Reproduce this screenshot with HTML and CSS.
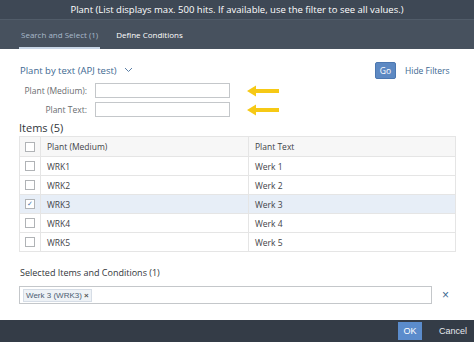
FILE: index.html
```html
<!DOCTYPE html>
<html lang="en">
<head>
    <meta charset="UTF-8">
    <meta name="viewport" content="width=device-width, initial-scale=1.0">
    <title>Plant Value Help</title>
    <link rel="stylesheet" href="styles.css">
</head>
<body>
    <div class="dialog">
        <div class="title">Plant (List displays max. 500 hits. If available, use the filter to see all values.)</div>
        <div class="tabs">
            <span class="tab active">Search and Select (1)</span>
            <span class="tab">Define Conditions</span>
        </div>

        <div class="content">
            <div class="filter-head">
                <span class="variant">Plant by text (APJ test)
                    <svg class="chev" width="9" height="6" viewBox="0 0 9 6"><path d="M1 1l3.5 3.5L8 1" fill="none" stroke="#5b7fa6" stroke-width="1"/></svg>
                </span>
                <span class="filter-actions">
                    <button class="go">Go</button>
                    <span class="link">Hide Filters</span>
                </span>
            </div>

            <div class="filters">
                <div class="field">
                    <label>Plant (Medium):</label>
                    <input type="text">
                    <svg class="arrow" width="34" height="12" viewBox="0 0 34 12"><path d="M1 6l9-5.5v3.5h23v4H10v3.5z" fill="#f6c915"/></svg>
                </div>
                <div class="field">
                    <label>Plant Text:</label>
                    <input type="text">
                    <svg class="arrow" width="34" height="12" viewBox="0 0 34 12"><path d="M1 6l9-5.5v3.5h23v4H10v3.5z" fill="#f6c915"/></svg>
                </div>
            </div>

            <div class="section-title">Items (5)</div>
            <table class="items">
                <tr class="head">
                    <td class="cb"><span class="box"></span></td>
                    <td>Plant (Medium)</td>
                    <td>Plant Text</td>
                </tr>
                <tr><td class="cb"><span class="box"></span></td><td>WRK1</td><td>Werk 1</td></tr>
                <tr><td class="cb"><span class="box"></span></td><td>WRK2</td><td>Werk 2</td></tr>
                <tr class="sel"><td class="cb"><span class="box checked">&#10003;</span></td><td>WRK3</td><td>Werk 3</td></tr>
                <tr><td class="cb"><span class="box"></span></td><td>WRK4</td><td>Werk 4</td></tr>
                <tr><td class="cb"><span class="box"></span></td><td>WRK5</td><td>Werk 5</td></tr>
            </table>

            <div class="section-title small">Selected Items and Conditions (1)</div>
            <div class="selected">
                <div class="tokens">
                    <span class="token">Werk 3 (WRK3) <b>&#215;</b></span>
                </div>
                <span class="clear">&#215;</span>
            </div>
        </div>

        <div class="footer">
            <button class="ok">OK</button>
            <span class="cancel">Cancel</span>
        </div>
    </div>
</body>
</html>
```

FILE: styles.css
```css
body { margin: 0; font-family: "Open Sans", Arial, sans-serif; background: #fff; }
.dialog { width: 474px; height: 342px; display: flex; flex-direction: column; overflow: hidden; }

.title { height: 19px; background: #3e4855; color: #fff; font-size: 9.5px; line-height: 19px; text-align: center; border-bottom: 1px solid #515c69; }
.tabs { height: 29px; background: #47515e; display: flex; align-items: stretch; padding-left: 19px; gap: 14px; }
.tab { font-size: 8px; color: #fff; display: flex; align-items: center; padding: 0 2px; }
.tab.active { color: #a9b9cb; border-bottom: 2px solid #c8d6e6; padding-top: 2px; }

.content { flex: 1; padding: 8px 19px 0 19px; }

.filter-head { display: flex; justify-content: space-between; align-items: center; height: 24px; margin-top: 1px; }
.variant { color: #3d6891; font-size: 9.5px; margin-left: 1px; display: flex; align-items: center; gap: 7px; }
.filter-actions { display: flex; align-items: center; gap: 9px; }
.go { background: #5d89c3; color: #fff; border: 1px solid #4c77b0; border-radius: 2px; font-family: "Open Sans", sans-serif; font-size: 8.5px; padding: 0; width: 21px; height: 17px; }
.link { color: #3d6891; font-size: 8.5px; width: 50px; }

.filters { display: flex; flex-direction: column; gap: 4px; margin-top: 1px; }
.field { display: flex; align-items: center; height: 15px; }
.field label { width: 68px; text-align: right; font-size: 8.5px; color: #6a6d70; margin-right: 8px; }
.field input { width: 133px; height: 13px; border: 1px solid #c4c7ca; padding: 0; margin: 0; }
.arrow { margin-left: 16px; }

.section-title { font-size: 11px; color: #32363a; margin-top: 3px; height: 16px; line-height: 16px; }
.section-title.small { font-size: 9px; margin-top: 13px; margin-left: 1px; }

.items { width: 437px; border-collapse: collapse; font-size: 8.5px; color: #3f4347; }
.items td { height: 18px; border: 1px solid #e5e5e5; padding: 0 6px; }
.items td.cb { width: 6px; padding: 0 5px; }
.items tr.head td { background: #f7f7f7; height: 19px; }
.items tr.sel td { background: #e7eef7; }
.items td:nth-child(2) { width: 195px; }
.box { display: block; width: 8px; height: 8px; border: 1px solid #b0b3b6; background: #fff; font-size: 7px; line-height: 8px; text-align: center; color: #4a77a8; }

.selected { display: flex; align-items: center; margin-top: 5px; }
.tokens { width: 408px; height: 16px; border: 1px solid #c4c7ca; display: flex; align-items: center; padding-left: 3px; }
.token { font-family: "Liberation Sans", Arial, sans-serif; font-size: 8px; color: #4b5d72; background: #eef2f6; border: 1px solid #d6dde6; padding: 0 2px; height: 11px; line-height: 11px; }
.token b { font-weight: bold; color: #555; }
.clear { margin-left: 10px; font-family: "Liberation Sans", Arial, sans-serif; font-size: 12px; color: #3d6891; }

.footer { height: 22px; background: #343c47; display: flex; align-items: center; justify-content: flex-end; padding-right: 7px; gap: 17px; }
.ok { background: #5b8ccc; color: #fff; border: none; font-family: "Liberation Sans", Arial, sans-serif; font-size: 9px; width: 24px; height: 18px; padding: 0; }
.cancel { color: #e6eaee; font-family: "Liberation Sans", Arial, sans-serif; font-size: 9px; }
```
